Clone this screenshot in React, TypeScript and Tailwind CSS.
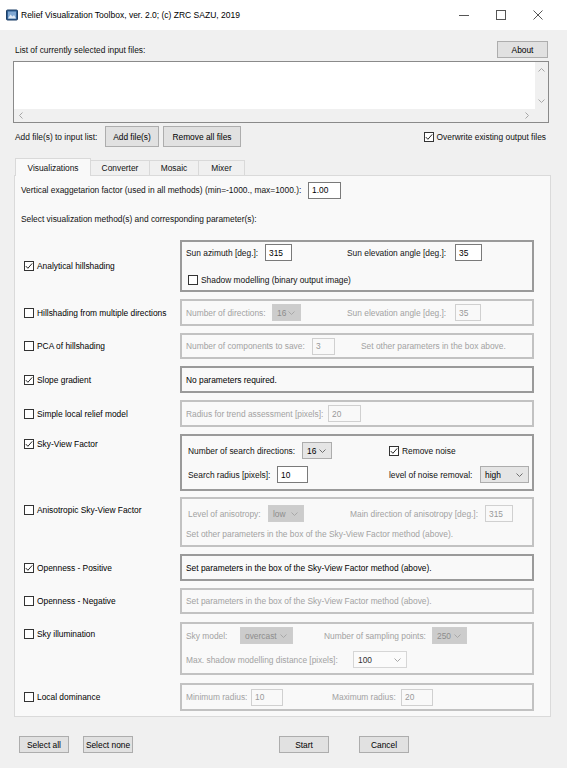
import React from 'react';

const OFF = 'text-[#a2a2a2]';

function Check({ checked }: { checked?: boolean }) {
  return (
    <span className="w-[10px] h-[10px] border border-[#333333] bg-white flex items-center justify-center shrink-0">
      {checked && (
        <svg width="8" height="8" viewBox="0 0 8 8">
          <path d="M0.8 4.1 L2.9 6.3 L7.2 1.4" fill="none" stroke="#222222" strokeWidth="1" />
        </svg>
      )}
    </span>
  );
}

function Chevron({ off }: { off?: boolean }) {
  return (
    <svg width="7" height="4" viewBox="0 0 7 4" className="shrink-0">
      <path d="M0.5 0.5 L3.5 3.5 L6.5 0.5" fill="none" stroke={off ? '#a8a8a8' : '#6e6e6e'} strokeWidth="1" />
    </svg>
  );
}

function TextBox({ value, w, off }: { value: string; w: string; off?: boolean }) {
  return (
    <div
      className={`${w} h-[17px] shrink-0 border px-[3px] flex items-center ${
        off ? 'border-[#d0d0d0] bg-[#f9f9f9] text-[#9a9a9a]' : 'border-[#7a7a7a] bg-white text-black'
      }`}
    >
      {value}
    </div>
  );
}

function Combo({ value, w, off, edit }: { value: string; w: string; off?: boolean; edit?: boolean }) {
  let look = 'border-[#adadad] bg-[#e5e5e5] text-black';
  if (off) look = 'border-[#cdcdcd] bg-[#cccccc] text-[#8c8c8c]';
  if (edit) look = 'border-[#d6d6d6] bg-[#fbfbfb] text-[#333333]';
  return (
    <div className={`${w} h-[17px] shrink-0 border pl-[4px] pr-[5px] flex items-center justify-between ${look}`}>
      <span>{value}</span>
      <Chevron off={off || edit} />
    </div>
  );
}

function Button({ children, className }: { children: React.ReactNode; className: string }) {
  return (
    <div className={`border border-[#adadad] bg-[#e1e1e1] flex items-center justify-center text-black shrink-0 ${className}`}>
      {children}
    </div>
  );
}

function Method({
  label,
  checked,
  active,
  box,
  labelTop,
  children,
}: {
  label: string;
  checked?: boolean;
  active?: boolean;
  box: string;
  labelTop?: string;
  children: React.ReactNode;
}) {
  return (
    <div className="flex">
      <div className={`w-[165px] pl-[9px] flex ${labelTop ? `items-start ${labelTop}` : 'items-center'}`}>
        <Check checked={checked} />
        <span className="ml-[3px] text-black">{label}</span>
      </div>
      <div className={`w-[354px] border-2 ${active ? 'border-[#9a9a9a]' : 'border-[#c2c2c2]'} ${box}`}>{children}</div>
    </div>
  );
}

function TitleIcon() {
  return (
    <svg width="12" height="12" viewBox="0 0 12 12" className="ml-[6px] shrink-0">
      <rect x="0.5" y="1" width="11" height="10" rx="1" fill="#2f5f93" stroke="#1d3f66" />
      <rect x="2" y="2.5" width="8" height="7" fill="#7fa7d2" />
      <path d="M2 9.5 L4.5 5.5 L6.5 7.5 L8 6 L10 9.5 Z" fill="#dfe9f4" />
    </svg>
  );
}

export default function App() {
  return (
    <div className="w-[567px] h-[768px] bg-[#f0f0f0] text-[8.4px] leading-[10px] whitespace-nowrap text-[#111111] font-['Liberation_Sans',Arial,sans-serif] overflow-hidden">
      {/* Title bar */}
      <div className="h-[30px] bg-white flex items-center">
        <TitleIcon />
        <span className="ml-[3px] text-[8.5px] text-black">Relief Visualization Toolbox, ver. 2.0; (c) ZRC SAZU, 2019</span>
        <div className="ml-auto mr-[11px] flex h-full">
          <div className="w-[37px] flex items-center justify-center">
            <svg width="10" height="10" viewBox="0 0 10 10">
              <path d="M0 5.5 H10" stroke="#555555" strokeWidth="1" />
            </svg>
          </div>
          <div className="w-[37px] flex items-center justify-center">
            <svg width="10" height="10" viewBox="0 0 10 10">
              <rect x="0.5" y="0.5" width="9" height="9" fill="none" stroke="#555555" strokeWidth="1" />
            </svg>
          </div>
          <div className="w-[37px] flex items-center justify-center">
            <svg width="10" height="10" viewBox="0 0 10 10">
              <path d="M0.5 0.5 L9.5 9.5 M9.5 0.5 L0.5 9.5" stroke="#555555" strokeWidth="1" />
            </svg>
          </div>
        </div>
      </div>

      {/* Input files */}
      <div className="mt-[11px] h-[17px] flex items-center pl-[15px] pr-[19px]">
        <span>List of currently selected input files:</span>
        <Button className="ml-auto w-[51px] h-[17px]">About</Button>
      </div>
      <div className="mt-[3px] ml-[13px] w-[536px] h-[62px] border border-[#8a8a8a] bg-white flex flex-col">
        <div className="flex flex-1">
          <div className="flex-1 bg-white" />
          <div className="w-[13px] bg-[#f0f0f0] flex flex-col items-center justify-between py-[6px]">
            <svg width="7" height="4" viewBox="0 0 7 4">
              <path d="M0.5 3.5 L3.5 0.5 L6.5 3.5" fill="none" stroke="#a6a6a6" strokeWidth="1" />
            </svg>
            <Chevron off />
          </div>
        </div>
        <div className="h-[13px] bg-[#f0f0f0] flex items-center">
          <svg width="4" height="7" viewBox="0 0 4 7" className="ml-[5px]">
            <path d="M3.5 0.5 L0.5 3.5 L3.5 6.5" fill="none" stroke="#a6a6a6" strokeWidth="1" />
          </svg>
          <svg width="4" height="7" viewBox="0 0 4 7" className="ml-auto mr-[19px]">
            <path d="M0.5 0.5 L3.5 3.5 L0.5 6.5" fill="none" stroke="#a6a6a6" strokeWidth="1" />
          </svg>
        </div>
      </div>
      <div className="mt-[3px] h-[21px] flex items-center pl-[15px]">
        <span className="w-[90px]">Add file(s) to input list:</span>
        <Button className="w-[54px] h-[21px]">Add file(s)</Button>
        <Button className="ml-[4px] w-[78px] h-[21px]">Remove all files</Button>
        <div className="ml-auto mr-[21px] flex items-center">
          <Check checked />
          <span className="ml-[3px]">Overwrite existing output files</span>
        </div>
      </div>

      {/* Tabs */}
      <div className="mt-[11px] ml-[15px] h-[17px] flex items-end">
        <div className="w-[76px] h-[18px] -mb-px bg-[#f9f9f9] border border-b-0 border-[#d9d9d9] flex items-center justify-center">
          Visualizations
        </div>
        <div className="w-[59px] h-[15px] border border-l-0 border-b-0 border-[#d9d9d9] flex items-center justify-center">
          Converter
        </div>
        <div className="w-[49px] h-[15px] border border-l-0 border-b-0 border-[#d9d9d9] flex items-center justify-center">
          Mosaic
        </div>
        <div className="w-[46px] h-[15px] border border-l-0 border-b-0 border-[#d9d9d9] flex items-center justify-center">
          Mixer
        </div>
      </div>
      <div className="ml-[14px] w-[537px] h-[542px] bg-[#f9f9f9] border border-[#dadada] pt-[6px] flex flex-col">
        <div className="h-[16px] flex items-center pl-[6px]">
          <span className="w-[287px] shrink-0">Vertical exaggetarion factor (used in all methods) (min=-1000., max=1000.):</span>
          <TextBox w="w-[33px]" value="1.00" />
        </div>
        <div className="mt-[16px] h-[10px] pl-[6px]">Select visualization method(s) and corresponding parameter(s):</div>

        <div className="mt-[16px] flex flex-col">
          <Method label="Analytical hillshading" checked active box="h-[52px]">
            <div className="mt-[2px] h-[17px] flex items-center pl-[4px]">
              <span className="w-[79px]">Sun azimuth [deg.]:</span>
              <TextBox w="w-[27px]" value="315" />
              <span className="ml-[55px] w-[108px]">Sun elevation angle [deg.]:</span>
              <TextBox w="w-[27px]" value="35" />
            </div>
            <div className="mt-[14px] h-[10px] flex items-center pl-[6px]">
              <Check />
              <span className="ml-[3px]">Shadow modelling (binary output image)</span>
            </div>
          </Method>

          <div className="mt-[7px]">
            <Method label="Hillshading from multiple directions" box="h-[27px] flex items-center pl-[4px]">
              <span className={`w-[86px] ${OFF}`}>Number of directions:</span>
              <Combo w="w-[29px]" value="16" off />
              <span className={`ml-[46px] w-[108px] ${OFF}`}>Sun elevation angle [deg.]:</span>
              <TextBox w="w-[26px]" value="35" off />
            </Method>
          </div>

          <div className="mt-[7px]">
            <Method label="PCA of hillshading" box="h-[26px] flex items-center pl-[4px]">
              <span className={`w-[126px] ${OFF}`}>Number of components to save:</span>
              <TextBox w="w-[23px]" value="3" off />
              <span className={`ml-[26px] ${OFF}`}>Set other parameters in the box above.</span>
            </Method>
          </div>

          <div className="mt-[7px]">
            <Method label="Slope gradient" checked active box="h-[27px] flex items-center pl-[4px]">
              <span className="text-black">No parameters required.</span>
            </Method>
          </div>

          <div className="mt-[7px]">
            <Method label="Simple local relief model" box="h-[27px] flex items-center pl-[4px]">
              <span className={`w-[142px] ${OFF}`}>Radius for trend assessment [pixels]:</span>
              <TextBox w="w-[33px]" value="20" off />
            </Method>
          </div>

          <div className="mt-[7px]">
            <Method label="Sky-View Factor" checked active labelTop="pt-[5px]" box="h-[57px]">
              <div className="mt-[6px] h-[17px] flex items-center pl-[6px]">
                <span className="w-[114px]">Number of search directions:</span>
                <Combo w="w-[30px]" value="16" />
                <div className="ml-[57px] flex items-center">
                  <Check checked />
                  <span className="ml-[3px]">Remove noise</span>
                </div>
              </div>
              <div className="mt-[7px] h-[17px] flex items-center pl-[6px]">
                <span className="w-[89px]">Search radius [pixels]:</span>
                <TextBox w="w-[31px]" value="10" />
                <span className="ml-[81px] w-[91px]">level of noise removal:</span>
                <Combo w="w-[49px]" value="high" />
              </div>
            </Method>
          </div>

          <div className="mt-[6px]">
            <Method label="Anisotropic Sky-View Factor" labelTop="pt-[8px]" box="h-[50px]">
              <div className="mt-[6px] h-[17px] flex items-center pl-[6px]">
                <span className={`w-[80px] ${OFF}`}>Level of anisotropy:</span>
                <Combo w="w-[36px]" value="low" off />
                <span className={`ml-[46px] w-[135px] ${OFF}`}>Main direction of anisotropy [deg.]:</span>
                <TextBox w="w-[28px]" value="315" off />
              </div>
              <div className={`mt-[7px] h-[10px] pl-[4px] ${OFF}`}>
                Set other parameters in the box of the Sky-View Factor method (above).
              </div>
            </Method>
          </div>

          <div className="mt-[7px]">
            <Method label="Openness - Positive" checked active box="h-[27px] flex items-center pl-[4px]">
              <span className="text-black">Set parameters in the box of the Sky-View Factor method (above).</span>
            </Method>
          </div>

          <div className="mt-[7px]">
            <Method label="Openness - Negative" box="h-[26px] flex items-center pl-[4px]">
              <span className={OFF}>Set parameters in the box of the Sky-View Factor method (above).</span>
            </Method>
          </div>

          <div className="mt-[8px]">
            <Method label="Sky illumination" labelTop="pt-[7px]" box="h-[53px]">
              <div className="mt-[3px] h-[17px] flex items-center pl-[4px]">
                <span className={`w-[54px] ${OFF}`}>Sky model:</span>
                <Combo w="w-[53px]" value="overcast" off />
                <span className={`ml-[31px] w-[108px] ${OFF}`}>Number of sampling points:</span>
                <Combo w="w-[35px]" value="250" off />
              </div>
              <div className="mt-[7px] h-[17px] flex items-center pl-[4px]">
                <span className={`w-[167px] ${OFF}`}>Max. shadow modelling distance [pixels]:</span>
                <Combo w="w-[54px]" value="100" edit />
              </div>
            </Method>
          </div>

          <div className="mt-[8px]">
            <Method label="Local dominance" box="h-[28px] flex items-center pl-[4px]">
              <span className={`w-[65px] ${OFF}`}>Minimum radius:</span>
              <TextBox w="w-[32px]" value="10" off />
              <span className={`ml-[49px] w-[69px] ${OFF}`}>Maximum radius:</span>
              <TextBox w="w-[32px]" value="20" off />
            </Method>
          </div>
        </div>
      </div>

      {/* Bottom buttons */}
      <div className="mt-[19px] h-[17px] flex items-center">
        <Button className="ml-[19px] w-[50px] h-[17px]">Select all</Button>
        <Button className="ml-[14px] w-[50px] h-[17px] border-[#6f6f6f]">Select none</Button>
        <Button className="ml-[146px] w-[50px] h-[17px]">Start</Button>
        <Button className="ml-[30px] w-[50px] h-[17px]">Cancel</Button>
      </div>
    </div>
  );
}
